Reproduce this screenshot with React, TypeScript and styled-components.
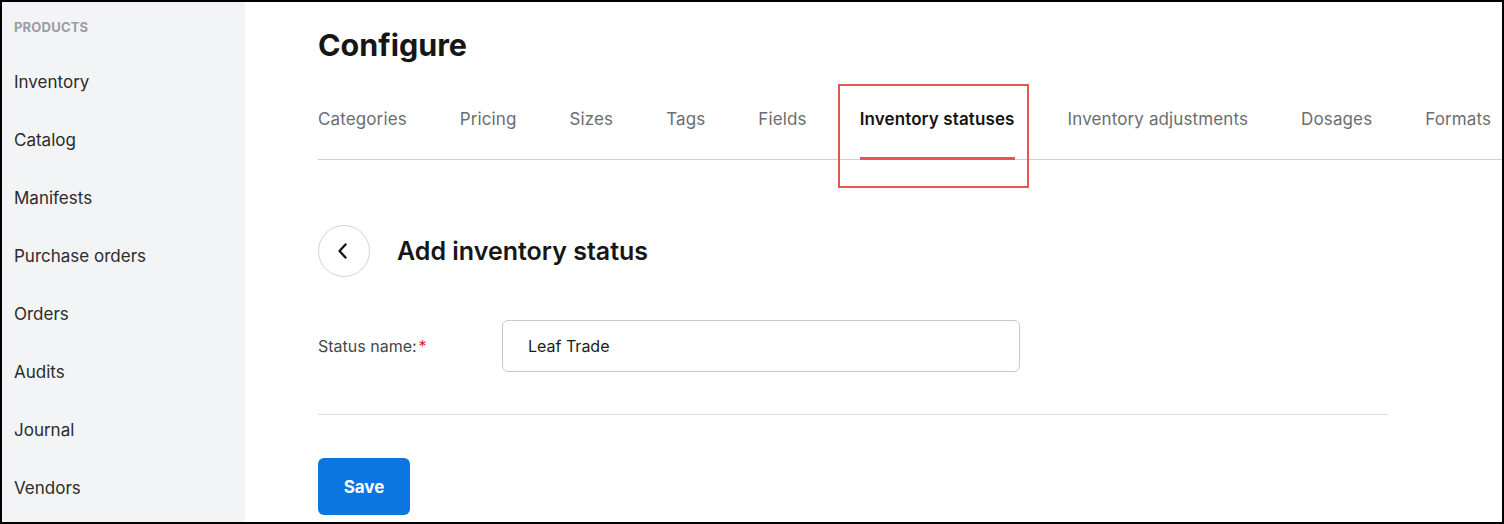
import * as React from "react";
import styled, { createGlobalStyle } from "styled-components";

const GlobalStyle = createGlobalStyle`
  html, body {
    margin: 0;
    padding: 0;
    background: #fff;
  }
  * {
    box-sizing: border-box;
  }
`;

const FONT = `Inter, "Noto Sans", "Liberation Sans", sans-serif`;

const SFrame = styled.div`
  display: flex;
  width: 1504px;
  height: 524px;
  border: 2px solid #000;
  overflow: hidden;
  font-family: ${FONT};
  color: #1c1c1c;
`;

const SSidebar = styled.nav`
  flex: 0 0 243px;
  background: #f3f4f6;
  padding: 16px 0 0 12px;
`;

const SSectionTitle = styled.div`
  font-size: 13px;
  line-height: 18px;
  font-weight: 700;
  letter-spacing: 0.2px;
  color: #9a9da3;
  margin-bottom: 17px;
`;

const SNavItem = styled.div`
  font-size: 17px;
  line-height: 58px;
  height: 58px;
  color: #2b2b2b;
`;

const SMain = styled.main`
  flex: 1;
  min-width: 0;
  padding: 23px 0 0 73px;
  overflow: hidden;
`;

const STitle = styled.h1`
  margin: 0;
  font-size: 30.5px;
  line-height: 40px;
  font-weight: 700;
  color: #161616;
`;

const STabs = styled.div`
  display: flex;
  gap: 53px;
  margin-top: 42px;
  border-bottom: 1px solid #cfd0d2;
  white-space: nowrap;
`;

const STab = styled.div<{ $active?: boolean }>`
  position: relative;
  flex: 0 0 auto;
  font-size: 17px;
  letter-spacing: 0.12px;
  line-height: 24px;
  padding-bottom: 26px;
  font-weight: ${(p) => (p.$active ? 600 : 400)};
  color: ${(p) => (p.$active ? "#141414" : "#6b6d70")};
  border-bottom: 3px solid ${(p) => (p.$active ? "#e8525e" : "transparent")};
  margin-bottom: -1px;
`;

const SHighlight = styled.div`
  position: absolute;
  top: -23px;
  left: -22px;
  right: -14px;
  bottom: -31px;
  border: 2px solid #e5564e;
  pointer-events: none;
`;

const SForm = styled.div`
  width: 1070px;
`;

const SHeaderRow = styled.div`
  display: flex;
  align-items: center;
  gap: 27px;
  margin-top: 65px;
`;

const SBackButton = styled.button`
  width: 52px;
  height: 52px;
  border-radius: 50%;
  border: 1px solid #d4d4d4;
  background: #fff;
  display: flex;
  align-items: center;
  justify-content: center;
  padding: 0 2px 0 0;
  cursor: pointer;
`;

const SSubTitle = styled.h2`
  margin: 0;
  font-size: 25px;
  font-weight: 600;
  color: #161616;
`;

const SFieldRow = styled.div`
  display: flex;
  align-items: center;
  margin-top: 43px;
`;

const SLabel = styled.label`
  flex: 0 0 184px;
  font-size: 16px;
  color: #45474a;
`;

const SRequired = styled.span`
  color: #e0262f;
  margin-left: 2px;
`;

const SInput = styled.input`
  width: 518px;
  height: 52px;
  border: 1px solid #c9c9c9;
  border-radius: 6px;
  padding: 0 25px;
  font-family: ${FONT};
  font-size: 16px;
  color: #1c1c1c;
  outline: none;
`;

const SDivider = styled.hr`
  margin: 42px 0 0;
  border: 0;
  border-top: 1px solid #dcdcdc;
`;

const SSaveButton = styled.button`
  margin-top: 43px;
  width: 92px;
  height: 57px;
  border: 0;
  border-radius: 6px;
  background: #0b76e0;
  color: #fff;
  font-family: ${FONT};
  font-size: 17px;
  font-weight: 700;
  cursor: pointer;
`;

const navItems = [
  "Inventory",
  "Catalog",
  "Manifests",
  "Purchase orders",
  "Orders",
  "Audits",
  "Journal",
  "Vendors",
];

const tabs = [
  "Categories",
  "Pricing",
  "Sizes",
  "Tags",
  "Fields",
  "Inventory statuses",
  "Inventory adjustments",
  "Dosages",
  "Formats",
];

const App = () => {
  const [name, setName] = React.useState("Leaf Trade");
  const active = "Inventory statuses";

  return (
    <>
      <GlobalStyle />
      <SFrame>
        <SSidebar>
          <SSectionTitle>PRODUCTS</SSectionTitle>
          {navItems.map((item) => (
            <SNavItem key={item}>{item}</SNavItem>
          ))}
        </SSidebar>
        <SMain>
          <STitle>Configure</STitle>
          <STabs>
            {tabs.map((tab) => (
              <STab key={tab} $active={tab === active}>
                {tab}
                {tab === active && <SHighlight />}
              </STab>
            ))}
          </STabs>
          <SForm>
            <SHeaderRow>
              <SBackButton aria-label="Back">
                <svg width="16" height="18" viewBox="0 0 16 18" fill="none">
                  <path
                    d="M10.5 2.5 L4.5 9 L10.5 15.5"
                    stroke="#151515"
                    strokeWidth="2.4"
                    strokeLinecap="round"
                    strokeLinejoin="round"
                  />
                </svg>
              </SBackButton>
              <SSubTitle>Add inventory status</SSubTitle>
            </SHeaderRow>
            <SFieldRow>
              <SLabel htmlFor="status-name">
                Status name:<SRequired>*</SRequired>
              </SLabel>
              <SInput
                id="status-name"
                value={name}
                onChange={(e) => setName(e.target.value)}
              />
            </SFieldRow>
            <SDivider />
            <SSaveButton>Save</SSaveButton>
          </SForm>
        </SMain>
      </SFrame>
    </>
  );
};

export default App;
